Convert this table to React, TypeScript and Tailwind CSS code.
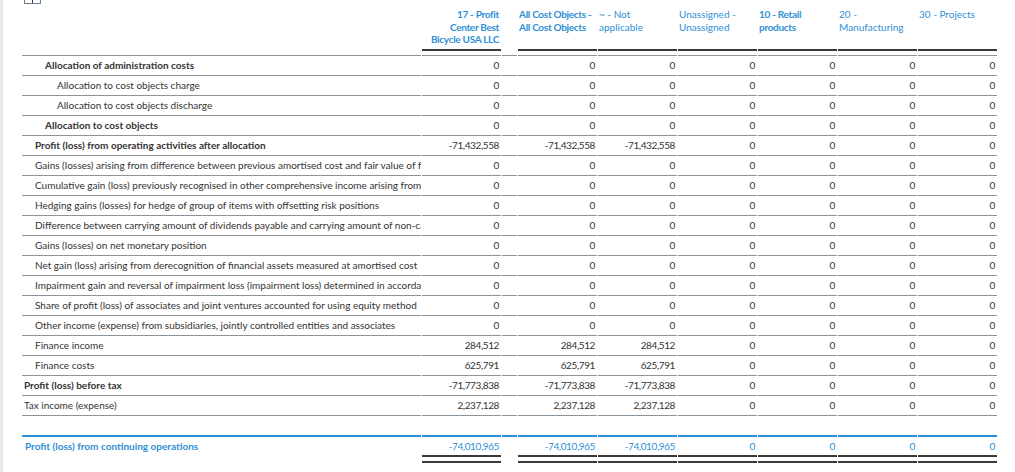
// Allocation statement grid – profit (loss) by cost object

const GRID =
  'grid grid-cols-[399px_79px_15px_79px_79px_79px_79px_79px_79px] gap-x-px';

type Row = {
  label: string;
  indent: 0 | 1 | 2 | 3;
  bold?: boolean;
  vals: string[];
};

const INDENT = ['pl-[2px]', 'pl-[13px]', 'pl-[23px]', 'pl-[35px]'];

const z = ['0', '0', '0', '0', '0', '0', '0'];
const three = (v: string) => [v, v, v, '0', '0', '0', '0'];

const rows: Row[] = [
  { label: 'Allocation of administration costs', indent: 2, bold: true, vals: z },
  { label: 'Allocation to cost objects charge', indent: 3, vals: z },
  { label: 'Allocation to cost objects discharge', indent: 3, vals: z },
  { label: 'Allocation to cost objects', indent: 2, bold: true, vals: z },
  {
    label: 'Profit (loss) from operating activities after allocation',
    indent: 1,
    bold: true,
    vals: three('-71,432,558'),
  },
  {
    label: 'Gains (losses) arising from difference between previous amortised cost and fair value of fi',
    indent: 1,
    vals: z,
  },
  {
    label: 'Cumulative gain (loss) previously recognised in other comprehensive income arising from',
    indent: 1,
    vals: z,
  },
  {
    label: 'Hedging gains (losses) for hedge of group of items with offsetting risk positions',
    indent: 1,
    vals: z,
  },
  {
    label: 'Difference between carrying amount of dividends payable and carrying amount of non-ca',
    indent: 1,
    vals: z,
  },
  { label: 'Gains (losses) on net monetary position', indent: 1, vals: z },
  {
    label: 'Net gain (loss) arising from derecognition of financial assets measured at amortised cost',
    indent: 1,
    vals: z,
  },
  {
    label: 'Impairment gain and reversal of impairment loss (impairment loss) determined in accorda',
    indent: 1,
    vals: z,
  },
  {
    label: 'Share of profit (loss) of associates and joint ventures accounted for using equity method',
    indent: 1,
    vals: z,
  },
  {
    label: 'Other income (expense) from subsidiaries, jointly controlled entities and associates',
    indent: 1,
    vals: z,
  },
  { label: 'Finance income', indent: 1, vals: three('284,512') },
  { label: 'Finance costs', indent: 1, vals: three('625,791') },
  { label: 'Profit (loss) before tax', indent: 0, bold: true, vals: three('-71,773,838') },
  { label: 'Tax income (expense)', indent: 0, vals: three('2,237,128') },
];

const headers: { lines: string[]; bold: boolean }[] = [
  { lines: ['All Cost Objects -', 'All Cost Objects'], bold: true },
  { lines: ['~ - Not', 'applicable'], bold: false },
  { lines: ['Unassigned -', 'Unassigned'], bold: false },
  { lines: ['10 - Retail', 'products'], bold: true },
  { lines: ['20 -', 'Manufacturing'], bold: false },
  { lines: ['30 - Projects'], bold: false },
];

function Header() {
  return (
    <div className={GRID + ' h-[47px]'}>
      <div />
      <div className="border-b-2 border-[#3a3a3a] pt-[4px] pr-[2px] text-right font-bold leading-[12.5px] tracking-[-0.3px] text-[#2f8fd5]">
        17 - Profit
        <br />
        Center Best
        <br />
        Bicycle USA LLC
      </div>
      <div />
      {headers.map((h, i) => (
        <div
          key={i}
          className={
            'whitespace-nowrap border-b-2 border-[#3a3a3a] pt-[4px] pl-[1px] leading-[12.5px] text-[#2f8fd5] ' +
            (h.bold ? 'font-bold tracking-[-0.3px]' : '')
          }
        >
          {h.lines.map((l, j) => (
            <div key={j}>{l}</div>
          ))}
        </div>
      ))}
    </div>
  );
}

function DataRow({ row }: { row: Row }) {
  return (
    <div className={GRID}>
      <div
        className={
          'flex h-[20px] items-center overflow-hidden whitespace-nowrap border-t border-[#8c949b] pb-px ' +
          INDENT[row.indent] +
          (row.bold ? ' font-bold' : '')
        }
      >
        {row.label}
      </div>
      <div className="flex h-[20px] items-center justify-end border-t border-[#8c949b] pr-[2px] pb-px tracking-[-0.4px]">
        {row.vals[0]}
      </div>
      <div className="h-[20px] border-t border-[#8c949b]" />
      {row.vals.slice(1).map((v, i) => (
        <div
          key={i}
          className="flex h-[20px] items-center justify-end border-t border-[#8c949b] pr-[2px] pb-px tracking-[-0.4px]"
        >
          {v}
        </div>
      ))}
    </div>
  );
}

function TotalRow() {
  const vals = ['-74,010,965', '-74,010,965', '-74,010,965', '0', '0', '0', '0'];
  const num = (v: string, key: number) => (
    <div key={key} className="flex flex-col">
      <div className="flex h-[20px] items-center justify-end border-t-2 border-[#2b90d9] pr-[2px] tracking-[-0.4px]">
        {v}
      </div>
      <div className="h-[2px] bg-[#3a3a3a]" />
      <div className="mt-[4px] h-[2px] bg-[#3a3a3a]" />
    </div>
  );
  return (
    <div className={GRID + ' text-[#2f8fd5]'}>
      <div className="flex h-[20px] items-center border-t-2 border-[#2b90d9] pl-[3px] font-bold">
        Profit (loss) from continuing operations
      </div>
      {num(vals[0], 0)}
      <div className="h-[20px] border-t-2 border-[#2b90d9]" />
      {vals.slice(1).map((v, i) => num(v, i + 1))}
    </div>
  );
}

export default function App() {
  return (
    <div className="flex h-[472px] w-[1015px] overflow-hidden bg-white font-['Lato',sans-serif] text-[10px] text-[#333]">
      <div className="w-[3px] shrink-0 bg-[#e9e9e9]" />
      <div className="ml-[19px] flex flex-col">
        <div className="h-[4px] overflow-hidden">
          <div className="ml-[2px] -mt-[11px] flex h-[15px] w-[17px] justify-center border border-[#6b7b90]">
            <div className="h-full w-px bg-[#1f3b66]" />
          </div>
        </div>
        <Header />
        <div className="h-[4px]" />
        {rows.map((r, i) => (
          <DataRow key={i} row={r} />
        ))}
        <div className={GRID}>
          {Array.from({ length: 9 }).map((_, i) => (
            <div key={i} className="h-[20px] border-t border-[#8c949b]" />
          ))}
        </div>
        <TotalRow />
      </div>
    </div>
  );
}
